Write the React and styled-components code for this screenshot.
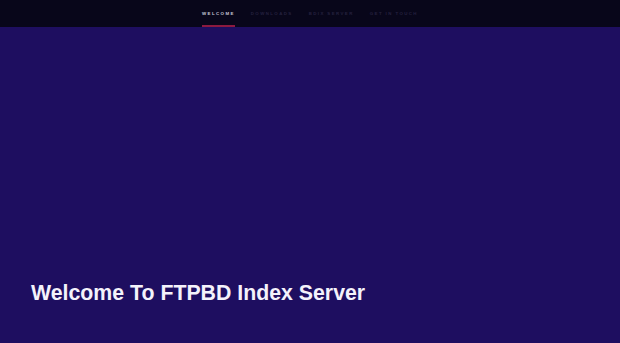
import React from 'react';
import styled, { createGlobalStyle } from 'styled-components';

const GlobalStyle = createGlobalStyle`
  html, body {
    margin: 0;
    padding: 0;
    height: 100%;
    background: #1e0e60;
  }
  #root {
    height: 100%;
  }
`;

const links = ['WELCOME', 'DOWNLOADS', 'BDIX SERVER', 'GET IN TOUCH'];

export default () => (
  <StyledPage>
    <GlobalStyle />
    <StyledNav>
      {links.map((label, i) => (
        <StyledLink key={label} active={i === 0}>
          {label}
        </StyledLink>
      ))}
    </StyledNav>
    <StyledHero>
      <StyledTitle>Welcome To FTPBD Index Server</StyledTitle>
    </StyledHero>
  </StyledPage>
);

const StyledPage = styled.div`
  height: 343px;
  display: flex;
  flex-direction: column;
  background: #1e0e60;
  font-family: 'Liberation Sans', Arial, sans-serif;
  overflow: hidden;
`;

const StyledNav = styled.nav`
  height: 27px;
  flex-shrink: 0;
  display: flex;
  justify-content: center;
  align-items: stretch;
  gap: 16px;
  background: #08061a;
`;

const StyledLink = styled.a`
  display: flex;
  align-items: center;
  font-size: 4.4px;
  font-weight: 700;
  letter-spacing: 1.4px;
  color: ${(p) => (p.active ? '#c8c6d8' : '#25213f')};
  border-bottom: 2px solid ${(p) => (p.active ? '#8c1a40' : 'transparent')};
  box-sizing: border-box;
  padding-top: 2px;
  cursor: pointer;
`;

const StyledHero = styled.section`
  flex: 1;
  display: flex;
  align-items: flex-end;
  padding: 0 0 37px 31px;
`;

const StyledTitle = styled.h1`
  margin: 0;
  font-size: 21.3px;
  font-weight: 700;
  color: #f4f2fb;
`;
